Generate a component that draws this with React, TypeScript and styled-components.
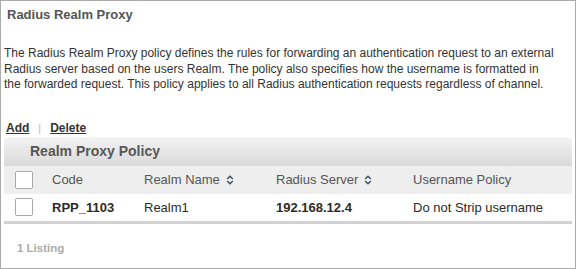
import React from 'react'
import styled, { createGlobalStyle } from 'styled-components'

const GlobalStyle = createGlobalStyle`
  html, body {
    margin: 0;
    padding: 0;
    background: #fff;
  }
  body {
    font-family: 'Liberation Sans', Arial, sans-serif;
  }
`

const Page = styled.div`
  box-sizing: border-box;
  width: 576px;
  height: 269px;
  border: 1px solid #ababab;
  padding: 6px 3px 0 3px;
  display: flex;
  flex-direction: column;
`

const Title = styled.h1`
  margin: 0 0 0 3px;
  font-size: 13px;
  line-height: 16px;
  font-weight: bold;
  color: #555;
`

const Description = styled.p`
  margin: 23px 0 0 0;
  font-size: 12px;
  line-height: 15.5px;
  color: #333;
  white-space: nowrap;
`

const Actions = styled.div`
  margin-top: 27px;
  display: flex;
  align-items: center;
  gap: 9px;
  padding-left: 2px;
  font-size: 12px;
  line-height: 16px;
`

const ActionLink = styled.a`
  color: #333;
  font-weight: bold;
  text-decoration: underline;
  cursor: pointer;
`

const Separator = styled.span`
  color: #d4b38c;
  font-size: 11px;
`

const Table = styled.div`
  margin-top: 1px;
  display: flex;
  flex-direction: column;
  border-bottom: 3px solid #d2d2d2;
`

const TableTitle = styled.div`
  height: 29px;
  display: flex;
  align-items: center;
  padding-left: 26px;
  border-radius: 5px 5px 0 0;
  background: linear-gradient(#f3f3f3, #dadada);
  font-size: 14px;
  font-weight: bold;
  color: #575757;
`

const Row = styled.div<{ $head?: boolean }>`
  display: grid;
  grid-template-columns: 48px 92px 132px 137px 1fr;
  align-items: center;
  height: ${p => (p.$head ? '28px' : '27px')};
  background: ${p => (p.$head ? '#eeeeee' : '#fff')};
  font-size: 13px;
  color: ${p => (p.$head ? '#555' : '#2b2b2b')};
`

const CheckCell = styled.div`
  padding-left: 11px;
  display: flex;
`

const Checkbox = styled.span`
  box-sizing: border-box;
  width: 18px;
  height: 18px;
  border: 1px solid #a9a9a9;
  border-radius: 2px;
  background: #fff;
`

const Cell = styled.div<{ $bold?: boolean }>`
  display: flex;
  align-items: center;
  gap: 6px;
  font-weight: ${p => (p.$bold ? 'bold' : 'normal')};
  white-space: nowrap;
`

const Listing = styled.div`
  margin-top: 18px;
  padding-left: 13px;
  font-size: 11.5px;
  font-weight: bold;
  color: #ababab;
`

const SortIcon = () => (
  <svg width="8" height="10" viewBox="0 0 8 10" fill="none" stroke="#3d5266" strokeWidth="1.5">
    <path d="M1.2 4 L4 1.2 L6.8 4" />
    <path d="M1.2 6 L4 8.8 L6.8 6" />
  </svg>
)

const App = () => (
  <>
    <GlobalStyle />
    <Page>
      <Title>Radius Realm Proxy</Title>
      <Description>
        The Radius Realm Proxy policy defines the rules for forwarding an authentication request to an external
        <br />
        Radius server based on the users Realm. The policy also specifies how the username is formatted in
        <br />
        the forwarded request. This policy applies to all Radius authentication requests regardless of channel.
      </Description>
      <Actions>
        <ActionLink>Add</ActionLink>
        <Separator>|</Separator>
        <ActionLink>Delete</ActionLink>
      </Actions>
      <Table>
        <TableTitle>Realm Proxy Policy</TableTitle>
        <Row $head>
          <CheckCell>
            <Checkbox />
          </CheckCell>
          <Cell>Code</Cell>
          <Cell>
            Realm Name <SortIcon />
          </Cell>
          <Cell>
            Radius Server <SortIcon />
          </Cell>
          <Cell>Username Policy</Cell>
        </Row>
        <Row>
          <CheckCell>
            <Checkbox />
          </CheckCell>
          <Cell $bold>RPP_1103</Cell>
          <Cell>Realm1</Cell>
          <Cell $bold>192.168.12.4</Cell>
          <Cell>Do not Strip username</Cell>
        </Row>
      </Table>
      <Listing>1 Listing</Listing>
    </Page>
  </>
)

export default App
